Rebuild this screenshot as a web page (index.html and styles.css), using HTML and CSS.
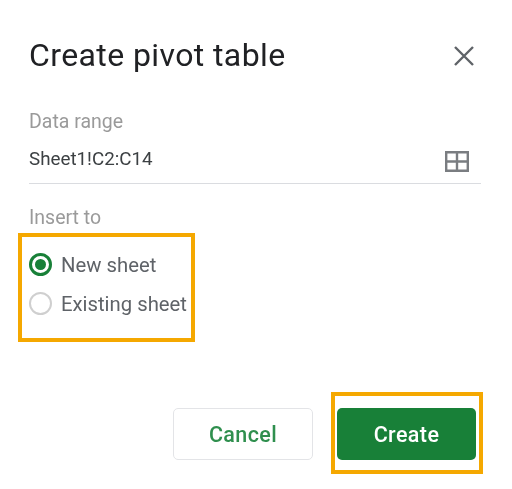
FILE: index.html
```
<!DOCTYPE html>
<html lang="en">
<head>
<meta charset="utf-8">
<title>Create pivot table</title>
<link rel="stylesheet" href="styles.css">
</head>
<body>
<div class="dialog">
  <header class="head">
    <h1 class="title">Create pivot table</h1>
    <svg class="close" viewBox="0 0 20 20" width="20" height="20"><path d="M1 1L19 19M19 1L1 19" fill="none" stroke="#5f6368" stroke-width="2.4"/></svg>
  </header>
  <div class="label range-label">Data range</div>
  <div class="range">
    <span class="range-value">Sheet1!C2:C14</span>
    <svg class="grid" viewBox="0 0 24 21" width="24" height="21"><path d="M1.2 1.2H22.8V19.8H1.2ZM12 1.2V19.8M1.2 10.5H22.8" fill="none" stroke="#7a7d81" stroke-width="2.4"/></svg>
  </div>
  <div class="label insert-label">Insert to</div>
  <div class="options">
    <div class="option">
      <span class="radio radio-on"><span class="dot"></span></span>
      <span class="option-text">New sheet</span>
    </div>
    <div class="option">
      <span class="radio"></span>
      <span class="option-text">Existing sheet</span>
    </div>
  </div>
  <div class="actions">
    <button class="btn btn-cancel">Cancel</button>
    <div class="highlight"><button class="btn btn-create">Create</button></div>
  </div>
</div>
</body>
</html>
```
FILE: styles.css
```
* { box-sizing: border-box; }
html, body { margin: 0; padding: 0; background: #fff; }
body { width: 512px; height: 489px; overflow: hidden; font-family: Roboto, "Liberation Sans", sans-serif; }
.dialog { padding: 38px 29px 0; filter: blur(0.3px); }
.head { display: flex; justify-content: space-between; align-items: center; height: 34px; padding-right: 9px; }
.title { margin: 0; font-family: Roboto, sans-serif; font-weight: 400; font-size: 32px; letter-spacing: 0.4px; line-height: 34px; color: #202124; }
.close { display: block; margin-top: 2px; }
.label { font-size: 19.5px; line-height: 22px; color: #9a9a9a; }
.range-label { margin-top: 39px; }
.range { display: flex; justify-content: space-between; align-items: center; height: 42px; width: 452px; padding: 0 12px 0 0; border-bottom: 1.5px solid #dadce0; margin-top: 9px; }
.range-value { font-size: 18.8px; color: #3c4043; position: relative; top: -4px; }
.grid { display: block; position: relative; top: -1px; }
.insert-label { margin-top: 23px; }
.options { width: 177px; height: 109px; margin: 4px 0 0 -11px; padding: 8px 0 0 7px; border: 4px solid #f5a800; }
.option { display: flex; align-items: center; gap: 9px; height: 39px; }
.radio { display: flex; align-items: center; justify-content: center; width: 23px; height: 23px; border: 2px solid #cfcfcf; border-radius: 50%; flex: none; }
.radio-on { border: 3px solid #188038; }
.dot { width: 11px; height: 11px; border-radius: 50%; background: #188038; }
.option-text { font-size: 20.3px; color: #5f6368; }
.actions { display: flex; justify-content: flex-end; align-items: flex-start; gap: 18px; margin: 50px 0 0; width: 454px; }
.btn { font-family: Roboto, sans-serif; font-size: 21.5px; font-weight: 500; letter-spacing: 0.4px; height: 52px; border-radius: 5px; }
.btn-cancel { width: 140px; margin-top: 16px; background: #fff; border: 1.5px solid #e3e4e7; color: #2f8f4e; }
.btn-create { width: 139px; background: #188038; border: 0; color: #fff; }
.highlight { width: 152px; height: 82px; padding: 12px 0 0 2px; border: 4px solid #f5a800; }
```
